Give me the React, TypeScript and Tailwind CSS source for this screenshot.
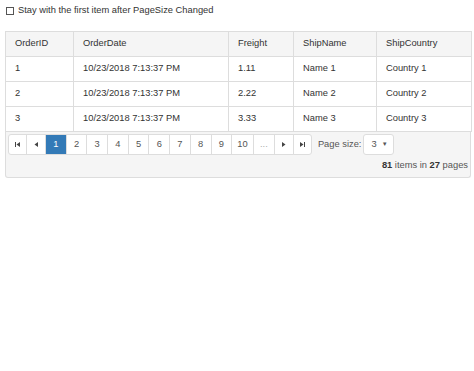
import { useState } from "react";

type Order = { id: number; date: string; freight: string; name: string; country: string };

const orders: Order[] = [
    { id: 1, date: "10/23/2018 7:13:37 PM", freight: "1.11", name: "Name 1", country: "Country 1" },
    { id: 2, date: "10/23/2018 7:13:37 PM", freight: "2.22", name: "Name 2", country: "Country 2" },
    { id: 3, date: "10/23/2018 7:13:37 PM", freight: "3.33", name: "Name 3", country: "Country 3" },
];

function NavIcon(props: { dir: "first" | "prev" | "next" | "last" }) {
    const left = props.dir === "first" || props.dir === "prev";
    const bar = props.dir === "first" || props.dir === "last";
    return (
        <svg width="6" height="5" viewBox="0 0 6 5" className="fill-[#444]">
            {left ? <polygon points="5,0 5,5 1.5,2.5" /> : <polygon points="1,0 1,5 4.5,2.5" />}
            {bar && (left ? <rect x="0" y="0" width="1" height="5" /> : <rect x="5" y="0" width="1" height="5" />)}
        </svg>
    );
}

function PagerButton(props: { children: React.ReactNode; width: string; active?: boolean; first?: boolean; last?: boolean }) {
    let className = "h-[21px] flex items-center justify-center border border-[#ddd] -ml-px";
    className += " " + props.width;
    if (props.active) className += " bg-[#337ab7] border-[#337ab7] text-white relative";
    else className += " bg-white text-[#555]";
    if (props.first) className += " ml-0 rounded-l-[3px]";
    if (props.last) className += " rounded-r-[3px]";
    return <div className={className}>{props.children}</div>;
}

export default function App() {
    const [stay, setStay] = useState(false);

    return (
        <div className="font-['Liberation_Sans',Arial,sans-serif] text-[9.33px] leading-[1.4] text-[#333] bg-white min-h-[371px] pl-[5px] pt-[5px]">
            <label className="flex items-center h-[12px] gap-[4px] pl-px">
                <span
                    onClick={() => setStay(!stay)}
                    className="w-[8px] h-[8px] border border-[#555] bg-white flex items-center justify-center text-[7px] leading-none"
                >
                    {stay ? "✓" : ""}
                </span>
                <span>Stay with the first item after PageSize Changed</span>
            </label>

            <div className="w-[466px] mt-[14px]">
                <table className="w-full table-fixed border-collapse">
                    <colgroup>
                        <col className="w-[68px]" />
                        <col className="w-[155px]" />
                        <col className="w-[65px]" />
                        <col className="w-[83px]" />
                        <col className="w-[95px]" />
                    </colgroup>
                    <thead>
                        <tr className="h-[25px] bg-[#f5f5f5]">
                            {["OrderID", "OrderDate", "Freight", "ShipName", "ShipCountry"].map((h) => (
                                <th key={h} className="border border-[#ddd] px-[9px] text-left font-normal">
                                    {h}
                                </th>
                            ))}
                        </tr>
                    </thead>
                    <tbody>
                        {orders.map((o) => (
                            <tr key={o.id} className="h-[25px] bg-white">
                                <td className="border border-[#ddd] px-[9px]">{o.id}</td>
                                <td className="border border-[#ddd] px-[9px]">{o.date}</td>
                                <td className="border border-[#ddd] px-[9px]">{o.freight}</td>
                                <td className="border border-[#ddd] px-[9px]">{o.name}</td>
                                <td className="border border-[#ddd] px-[9px]">{o.country}</td>
                            </tr>
                        ))}
                    </tbody>
                </table>

                <div className="h-[46px] bg-[#f5f5f5] border border-t-0 border-[#ddd] rounded-b-[3px] pt-[2px] pl-[2px] pr-[2px]">
                    <div className="flex items-center">
                        <PagerButton width="w-[19px]" first>
                            <NavIcon dir="first" />
                        </PagerButton>
                        <PagerButton width="w-[20px]">
                            <NavIcon dir="prev" />
                        </PagerButton>
                        <PagerButton width="w-[21.7px]" active>
                            1
                        </PagerButton>
                        {[2, 3, 4, 5, 6, 7, 8, 9].map((n) => (
                            <PagerButton key={n} width="w-[21.7px]">
                                {n}
                            </PagerButton>
                        ))}
                        <PagerButton width="w-[22.7px]">10</PagerButton>
                        <PagerButton width="w-[22px]">
                            <span className="text-[#aaa]">...</span>
                        </PagerButton>
                        <PagerButton width="w-[20px]">
                            <NavIcon dir="next" />
                        </PagerButton>
                        <PagerButton width="w-[19px]" last>
                            <NavIcon dir="last" />
                        </PagerButton>
                        <span className="ml-[6px] text-[#555]">Page size:</span>
                        <div className="ml-[2px] w-[31px] h-[21px] bg-white border border-[#ddd] rounded-[3px] flex items-center pl-[7px] gap-[5px] text-[#555]">
                            <span>3</span>
                            <span className="text-[6px]">▼</span>
                        </div>
                    </div>
                    <div className="text-right mt-[4px] text-[#555]">
                        <b className="text-[#333]">81</b> items in <b className="text-[#333]">27</b> pages
                    </div>
                </div>
            </div>
        </div>
    );
}
